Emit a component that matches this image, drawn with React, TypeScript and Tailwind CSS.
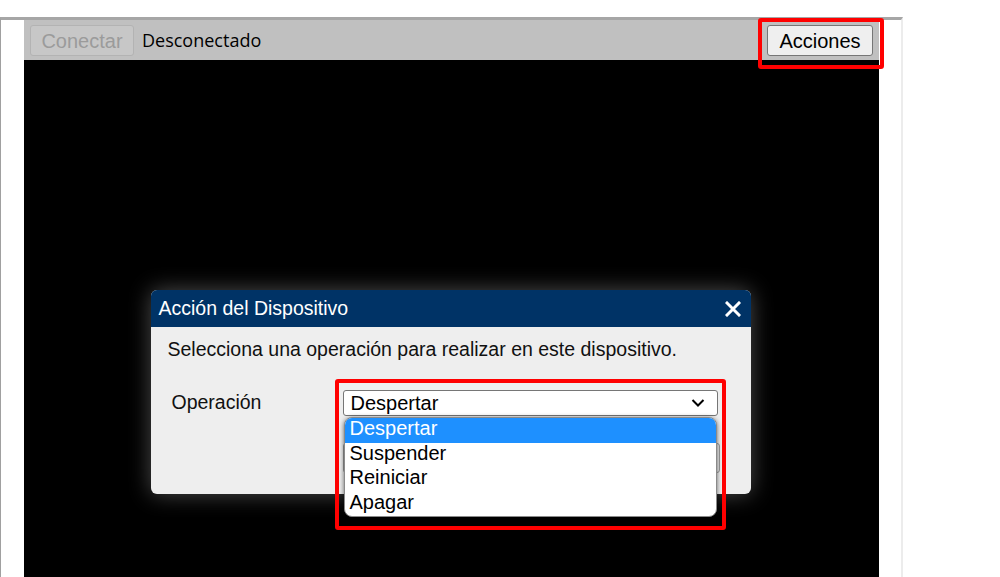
export default function App() {
  const options = ['Despertar', 'Suspender', 'Reiniciar', 'Apagar']

  return (
    <div className="relative h-screen overflow-hidden bg-white pt-[17px] font-['Liberation_Sans',Arial,sans-serif]">
      <div className="w-[903px] border-t-[3px] border-l border-r-2 border-t-[#a6a6a6] border-l-[#a0a0a0] border-r-[#ececec] pl-[23px] pr-[22px]">
        {/* Toolbar */}
        <div className="flex h-[40px] items-center bg-[#c0c0c0] px-[6px]">
          <button
            disabled
            className="h-[31px] w-[104px] rounded-[3px] border border-[#b3b3b3] bg-[#c7c7c7] text-[20px] text-[#9b9b9b]"
          >
            Conectar
          </button>
          <span className="ml-[8px] font-['Open_Sans',sans-serif] text-[18px] font-medium text-black">Desconectado</span>
          <button className="ml-auto h-[31px] w-[106px] rounded-[3px] border border-[#767676] bg-[#efefef] text-[20px] text-black">
            Acciones
          </button>
        </div>

        {/* Screen */}
        <div className="flex h-[664px] items-center justify-center bg-black pr-[2px]">
          <div className="w-[600px] rounded-[6px] bg-[#eeeeee] shadow-[0_0_22px_rgba(255,255,255,0.3)]">
            <div className="flex h-[37px] items-center justify-between rounded-t-[6px] bg-[#003366] pl-[8px] pr-[10px]">
              <span className="text-[19.5px] text-white">Acción del Dispositivo</span>
              <svg width="16" height="16" viewBox="0 0 16 16">
                <path d="M2 2 L14 14 M14 2 L2 14" stroke="white" strokeWidth="3" strokeLinecap="square" />
              </svg>
            </div>
            <div className="px-[17px] pb-[21px] pt-[10px]">
              <div className="text-[19.5px] leading-[24px] text-[#111]">
                Selecciona una operación para realizar en este dispositivo.
              </div>
              <div className="mt-[27px] flex items-center">
                <div className="w-[175px] pl-[4px] text-[19.5px] text-[#111]">Operación</div>
                <div className="relative">
                  <div className="flex h-[26px] w-[375px] items-center justify-between rounded-[3px] border border-[#767676] bg-white pl-[7px] pr-[12px] text-[20px] text-black">
                    <span>Despertar</span>
                    <svg width="14" height="10" viewBox="0 0 14 10">
                      <polyline points="1.5,2 7,7.5 12.5,2" fill="none" stroke="black" strokeWidth="2" />
                    </svg>
                  </div>
                  {/* open dropdown list */}
                  <div className="absolute left-[1px] top-[27px] z-10 w-[373px] overflow-hidden rounded-[8px] border border-[#8a8a8a] bg-white shadow-[0_1px_5px_rgba(0,0,0,0.6)]">
                    {options.map((opt, i) => (
                      <div
                        key={opt}
                        className={`flex h-[24.5px] items-center pb-[4px] pl-[5px] text-[20px] leading-none ${
                          i === 0 ? 'bg-[#1e90ff] text-white' : 'text-black'
                        }`}
                      >
                        {opt}
                      </div>
                    ))}
                  </div>
                </div>
              </div>
              <div className="ml-[175px] mt-[25px] h-[30px] w-[377px] rounded-[3px] border border-[#9a9a9a] bg-[#e9e9e9]" />
            </div>
          </div>
        </div>
      </div>

      {/* highlight annotations */}
      <div className="absolute left-[758px] top-[18px] h-[51px] w-[126px] rounded-[3px] border-4 border-[#ff0000]" />
      <div className="absolute left-[335px] top-[379px] h-[151px] w-[391px] rounded-[3px] border-4 border-[#ff0000]" />
    </div>
  )
}
